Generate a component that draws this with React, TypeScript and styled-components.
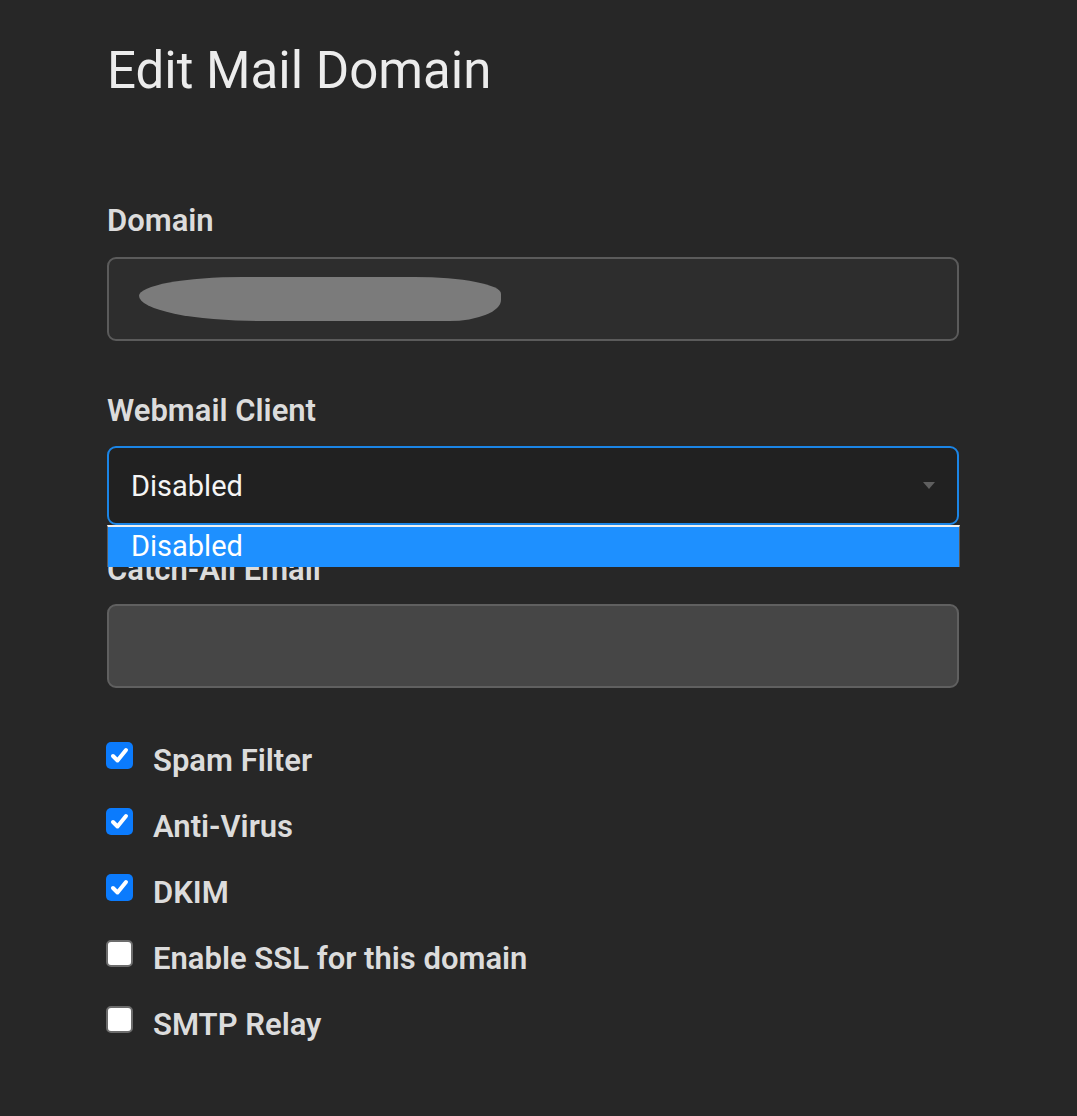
import React from "react";
import styled, { createGlobalStyle } from "styled-components";

const GlobalStyle = createGlobalStyle`
  html, body {
    margin: 0;
    padding: 0;
    background: #272727;
  }
  body {
    font-family: Roboto, "Noto Sans", "Liberation Sans", sans-serif;
    color: #dedede;
  }
`;

const Page = styled.div`
  min-height: 1116px;
  padding: 41px 0 0 107px;
  box-sizing: border-box;
  background: #272727;
`;

const Form = styled.form`
  width: 852px;
  display: flex;
  flex-direction: column;
`;

const Title = styled.h1`
  margin: 0 0 100px;
  font-size: 51px;
  line-height: 60px;
  font-weight: 400;
  color: #ececec;
`;

const Label = styled.label<{ $gap: number }>`
  display: block;
  margin: 0 0 ${(p) => p.$gap}px;
  font-size: 31px;
  line-height: 40px;
  font-weight: 600;
  color: #dcdcdc;
`;

const Field = styled.div<{ $after: number }>`
  position: relative;
  margin-bottom: ${(p) => p.$after}px;
`;

const Input = styled.div<{ $disabled?: boolean }>`
  height: 84px;
  box-sizing: border-box;
  border: 2px solid ${(p) => (p.$disabled ? "#606060" : "#5b5b5b")};
  border-radius: 9px;
  background: ${(p) => (p.$disabled ? "#464646" : "#2d2d2d")};
  display: flex;
  align-items: center;
  padding-left: 30px;
`;

const Redaction = styled.span`
  display: inline-block;
  width: 362px;
  height: 44px;
  background: #7b7b7b;
  border-radius: 30% 25% 15% 35% / 45% 40% 50% 60%;
  filter: blur(0.5px);
`;

const Select = styled.div`
  height: 79px;
  box-sizing: border-box;
  border: 2px solid #1b85e6;
  border-radius: 9px;
  background: #212121;
  display: flex;
  align-items: center;
  justify-content: space-between;
  padding: 0 22px 0 22px;
  font-size: 29px;
  color: #f4f4f4;
`;

const Arrow = styled.span`
  width: 0;
  height: 0;
  border-left: 6px solid transparent;
  border-right: 6px solid transparent;
  border-top: 7px solid #5f5f5f;
`;

const Options = styled.ul`
  position: absolute;
  top: 79px;
  left: 0;
  width: 853px;
  margin: 0;
  padding: 0;
  list-style: none;
  border-top: 2px solid #f0f0f0;
  border-left: 1px solid #5a5a5a;
  border-right: 1px solid #5a5a5a;
  box-sizing: border-box;
  z-index: 2;
`;

const Option = styled.li<{ $active?: boolean }>`
  height: 40px;
  line-height: 38px;
  padding-left: 23px;
  font-size: 29px;
  color: #ffffff;
  background: ${(p) => (p.$active ? "#1e90ff" : "#ffffff")};
`;

const Checks = styled.div`
  display: flex;
  flex-direction: column;
  gap: 26px;
  margin-top: 53px;
`;

const CheckRow = styled.label`
  display: flex;
  align-items: flex-start;
  gap: 20px;
  font-size: 31px;
  line-height: 40px;
  font-weight: 600;
  color: #dcdcdc;
`;

const Box = styled.span<{ $checked: boolean }>`
  width: 27px;
  height: 27px;
  margin-top: 1px;
  margin-left: -1px;
  box-sizing: border-box;
  border-radius: 5px;
  flex: none;
  display: flex;
  align-items: center;
  justify-content: center;
  background: ${(p) => (p.$checked ? "#0b7bfd" : "#ffffff")};
  border: ${(p) => (p.$checked ? "none" : "2px solid #6c6c6c")};
`;

function Check({ checked }: { checked: boolean }) {
  return (
    <Box $checked={checked}>
      {checked && (
        <svg width="21" height="21" viewBox="0 0 21 21">
          <path d="M4 11 L8.5 15.5 L17 5" fill="none" stroke="#fff" strokeWidth="4" strokeLinecap="round" strokeLinejoin="round" />
        </svg>
      )}
    </Box>
  );
}

const options = [
  { label: "Spam Filter", checked: true },
  { label: "Anti-Virus", checked: true },
  { label: "DKIM", checked: true },
  { label: "Enable SSL for this domain", checked: false },
  { label: "SMTP Relay", checked: false },
];

export default function App() {
  return (
    <Page>
      <GlobalStyle />
      <Form>
        <Title>Edit Mail Domain</Title>

        <Label $gap={16}>Domain</Label>
        <Field $after={50}>
          <Input>
            <Redaction />
          </Input>
        </Field>

        <Label $gap={15}>Webmail Client</Label>
        <Field $after={25}>
          <Select>
            <span>Disabled</span>
            <Arrow />
          </Select>
          <Options>
            <Option $active>Disabled</Option>
          </Options>
        </Field>

        <Label $gap={14}>Catch-All Email</Label>
        <Field $after={0}>
          <Input $disabled />
        </Field>

        <Checks>
          {options.map((o) => (
            <CheckRow key={o.label}>
              <Check checked={o.checked} />
              {o.label}
            </CheckRow>
          ))}
        </Checks>
      </Form>
    </Page>
  );
}
